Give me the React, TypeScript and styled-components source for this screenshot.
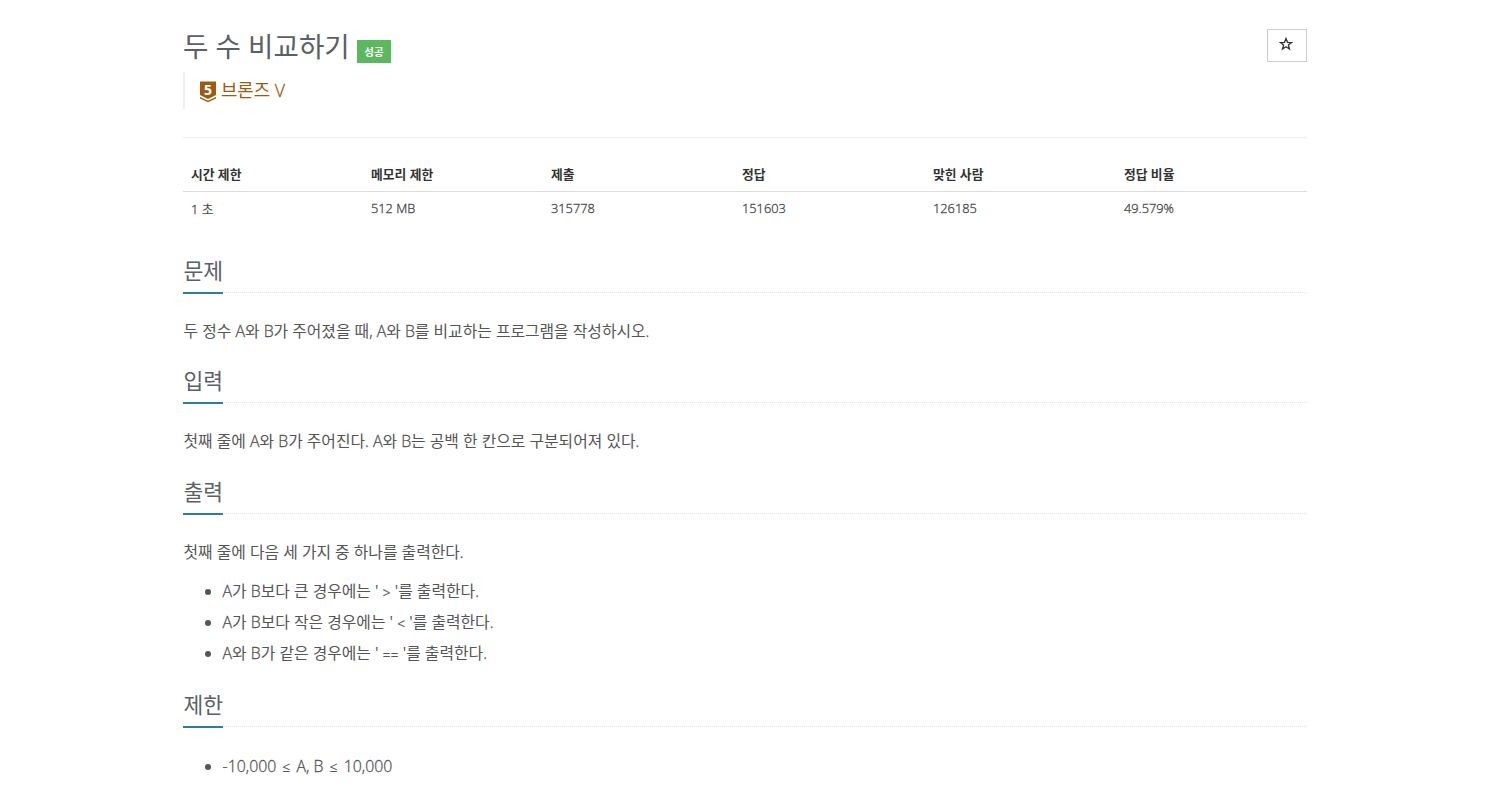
import React from "react";
import styled, { createGlobalStyle } from "styled-components";

const Global = createGlobalStyle`
  * { box-sizing: border-box; }
  body { margin: 0; background: #fff; overflow: hidden; color: #333; font-family: "Open Sans", "Noto Sans CJK KR", sans-serif; }
`;
const Page = styled.main`width: 1124px; margin-left: 183px; padding-top: 29px;`;
const Header = styled.header`display: flex; justify-content: space-between; align-items: flex-start; height: 109px; border-bottom: 1px solid #eee;`;
const TitleRow = styled.div`display: flex; align-items: flex-start; height: 43px;`;
const Title = styled.h1`margin: 0; width: 174px; font-size: 27.6px; line-height: 34px; font-weight: 400; color: #5a6066; white-space: nowrap;`;
const Label = styled.span`width: 34px; height: 23px; margin-top: 11px; background: #5cb85c; color: #fff; font-size: 10.5px; line-height: 24px; font-weight: 700; text-align: center; white-space: nowrap;`;
const Tier = styled.div`display: flex; align-items: center; height: 37px; padding-left: 15px; border-left: 2px solid #eee; color: #9d5a10; font-size: 17.8px; line-height: 24px; gap: 5px; white-space: nowrap;
  svg { margin-top: 2px; }
  span { margin-bottom: 1px; }
`;
const Star = styled.button`width: 40px; height: 33px; padding: 0 2px 3px 0; display: grid; place-items: center; background: #fff; border: 1px solid #ccc;`;
const Table = styled.table`width: 100%; margin: 18px 0 32px; border-collapse: collapse; table-layout: fixed; font-size: 12.8px; text-align: left;
  th { height: 35px; padding: 1px 8px 0; border-bottom: 1px solid #ddd; font-weight: 700; }
  td { height: 34px; padding: 0 8px; font-weight: 400; color: #444; }
`;
const Section = styled.section<{ $h: number }>`height: ${p => p.$h}px; color: #555;`;
const Headline = styled.div`height: 36px; border-bottom: 1px dotted #e1e5ea;`;
const Heading = styled.h2`display: block; width: 40px; margin: 0; height: 37px; padding-left: 0.5px; font-size: 21.5px; line-height: 27px; font-weight: 400; color: #5a6066; border-bottom: 2px solid #2a7f9f; white-space: nowrap;`;
const Text = styled.p`margin: 24px 0 0; padding-left: 0.5px; font-size: 15.84px; line-height: 28px; white-space: nowrap;`;
const List = styled.ul<{ $top: number }>`margin: ${p => p.$top}px 0 0; padding-left: 39.6px; font-size: 15.84px; line-height: 31px;`;
const Latin = styled.span`font-weight: 300; -webkit-text-stroke: 0.3px currentColor;`;
const Symbol = styled.span<{ $wide?: boolean }>`display: inline-block; padding: 0 ${p => (p.$wide ? 2 : 0)}px; font-size: 14px; line-height: 1; transform: translateY(${p => (p.$wide ? 0 : 1)}px);`;

/* Latin runs are set lighter than the Hangul around them. */
function Mixed({ children }: { children: string }) {
  return <>{children.split(/([A-Za-z0-9%.,\-]+|==|[<>≤])/).map((part, i) =>
    i % 2 === 0 ? part : /^(==|[<>≤])$/.test(part) ? <Symbol key={i} $wide={part === "≤"}>{part}</Symbol> : <Latin key={i}>{part}</Latin>)}</>;
}

export default function App() {
  return <><Global /><Page>
    <Header><div>
      <TitleRow><Title>두 수 비교하기</Title><Label>성공</Label></TitleRow>
      <Tier><svg width="16" height="22" viewBox="0 0 16 22"><path fill="#9d5a10" d="M0 0.5H16V14L8 18L0 14ZM0 16L8 19.8L16 16V17.5L8 21.3L0 17.5Z" /><text x="8" y="13.8" textAnchor="middle" fill="#fff" fontSize="14" fontWeight="700" fontFamily="Open Sans">5</text></svg><span><Mixed>브론즈 V</Mixed></span></Tier>
    </div><Star aria-label="즐겨찾기"><svg width="14" height="14" viewBox="0 0 14 14"><path d="M7 1.5L8.5 5.3L12.5 5.5L9.4 8L10.5 12L7 9.8L3.5 12L4.6 8L1.5 5.5L5.5 5.3Z" fill="none" stroke="#333" strokeWidth="1.3" /></svg></Star></Header>
    <Table><colgroup><col width="180" /><col width="180" /><col width="191" /><col width="191" /><col width="191" /><col width="191" /></colgroup>
      <thead><tr>{["시간 제한", "메모리 제한", "제출", "정답", "맞힌 사람", "정답 비율"].map(x => <th key={x}>{x}</th>)}</tr></thead>
      <tbody><tr>{["1 초", "512 MB", "315778", "151603", "126185", "49.579%"].map(x => <td key={x}><Mixed>{x}</Mixed></td>)}</tr></tbody>
    </Table>
    <Section $h={110}><Headline><Heading>문제</Heading></Headline><Text><Mixed>두 정수 A와 B가 주어졌을 때, A와 B를 비교하는 프로그램을 작성하시오.</Mixed></Text></Section>
    <Section $h={111}><Headline><Heading>입력</Heading></Headline><Text><Mixed>첫째 줄에 A와 B가 주어진다. A와 B는 공백 한 칸으로 구분되어져 있다.</Mixed></Text></Section>
    <Section $h={213}><Headline><Heading>출력</Heading></Headline><Text><Mixed>첫째 줄에 다음 세 가지 중 하나를 출력한다.</Mixed></Text>
      <List $top={10}><li><Mixed>{"A가 B보다 큰 경우에는 ' > '를 출력한다."}</Mixed></li><li><Mixed>{"A가 B보다 작은 경우에는 ' < '를 출력한다."}</Mixed></li><li><Mixed>{"A와 B가 같은 경우에는 ' == '를 출력한다."}</Mixed></li></List></Section>
    <Section $h={90}><Headline><Heading>제한</Heading></Headline><List $top={24}><li><Mixed>-10,000 ≤ A, B ≤ 10,000</Mixed></li></List></Section>
  </Page></>;
}
